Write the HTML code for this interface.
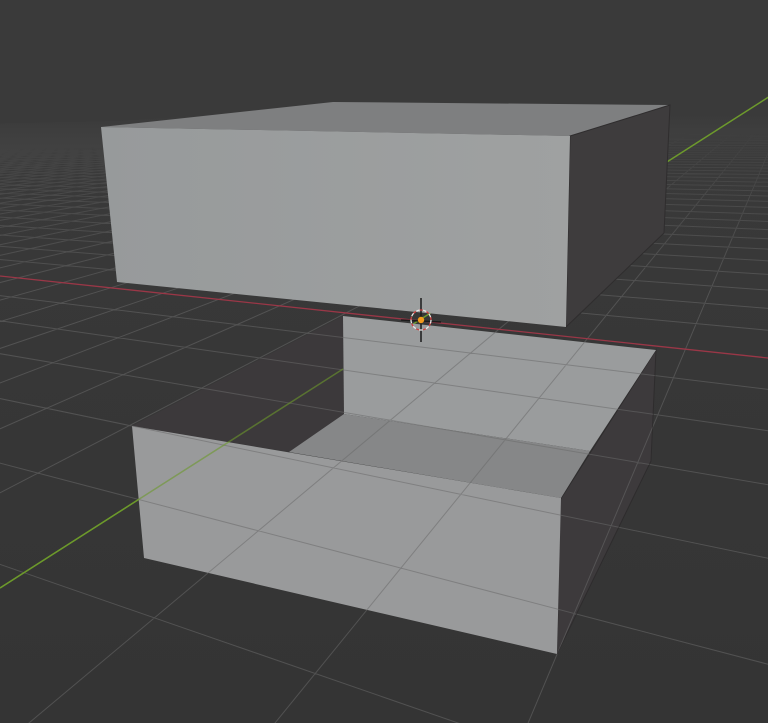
<!DOCTYPE html>
<html><head><meta charset="utf-8"><style>
html,body{margin:0;padding:0;background:#393939;overflow:hidden;width:768px;height:723px;}
svg{display:block}
</style></head><body>
<svg id="s" width="768" height="723" viewBox="0 0 768 723" xmlns="http://www.w3.org/2000/svg">
<defs>
<linearGradient id="bg" x1="0" y1="0" x2="0" y2="1"><stop offset="0" stop-color="#3a3a3a"/><stop offset="1" stop-color="#343434"/></linearGradient>
<linearGradient id="cover" x1="0" y1="0" x2="0" y2="300" gradientUnits="userSpaceOnUse"><stop offset="0" stop-color="#3a3a3a" stop-opacity="1"/><stop offset="0.38" stop-color="#3a3a3a" stop-opacity="1"/><stop offset="0.45" stop-color="#3a3a3a" stop-opacity="0.8"/><stop offset="0.65" stop-color="#3a3a3a" stop-opacity="0.4"/><stop offset="1" stop-color="#3a3a3a" stop-opacity="0"/></linearGradient>
<linearGradient id="front" x1="0" y1="0" x2="1" y2="0"><stop offset="0" stop-color="#979a9b"/><stop offset="1" stop-color="#9fa1a1"/></linearGradient>
</defs>
<rect width="768" height="723" fill="url(#bg)"/>
<g id="grid1" stroke="rgba(106,106,106,0.55)" stroke-width="1" fill="none"></g>
<rect x="0" y="0" width="768" height="300" fill="url(#cover)"/>
<line x1="0" y1="588" x2="850" y2="45" stroke="#6d9a2c" stroke-width="1.5"/>
<line x1="0" y1="276" x2="768" y2="358" stroke="#9a3747" stroke-width="1.3"/>
<polygon points="560,500 656,350 651,461 557,654" fill="#3d3a3c" stroke="#2e2c2d" stroke-width="1"/>
<polygon points="132,426 343,316 344,414 289,452" fill="#3c393b"/>
<polygon points="343,316 656,350 590,451 344,414" fill="#9a9c9d"/>
<polygon points="289,452 344,414 590,451 561,498" fill="#868788"/>
<polygon points="132,426 561,498 557,654 144,558" fill="#999a9b"/>
<g id="grid2" stroke="rgba(106,106,106,0.55)" stroke-width="1" fill="none"></g>
<line x1="0" y1="588" x2="343" y2="369" stroke="#6d9a2c" stroke-opacity="0.6" stroke-width="1.5"/>
<polygon points="101,127 333,102 670,105 570,136" fill="#7e7f80"/>
<polygon points="570,136 670,105 664,233 566,327" fill="#3e3c3d" stroke="#2f2d2e" stroke-width="1"/>
<polygon points="101,127 570,136 566,327 117,282" fill="url(#front)"/>
<g transform="translate(421,320)">
<line x1="0" y1="-22" x2="0" y2="22" stroke="#1a1a1a" stroke-width="1.5"/>
<line x1="-20" y1="0" x2="20" y2="2" stroke="#1a1a1a" stroke-width="1.5"/>
<circle r="10" fill="none" stroke="#e8e8e8" stroke-width="1.3" stroke-dasharray="4 3"/>
<circle r="10" fill="none" stroke="#d04040" stroke-width="1.3" stroke-dasharray="3 4" stroke-dashoffset="3.5"/>
<circle r="3.2" fill="#f39a1c"/>
</g>
</svg>
<script>
(function(){
var O=[420,320],V1=[-1200,149],V2=[800,77],a=-0.047,b=-0.085;
function P(X,Y){var w=a*X+b*Y+1;return [(a*X*V1[0]+b*Y*V2[0]+O[0])/w,(a*X*V1[1]+b*Y*V2[1]+O[1])/w];}
var d="";
for(var X=-80;X<=80;X++){ if(X==0)continue; var c=1+a*X; if(c<=0.02)continue;
 var ymax=(c-0.02)/(-b); var p1=P(X,ymax),p2=P(X,-600); d+="M"+p1[0].toFixed(1)+" "+p1[1].toFixed(1)+"L"+p2[0].toFixed(1)+" "+p2[1].toFixed(1);}
for(var Y=-80;Y<=80;Y++){ if(Y==0)continue; var c=1+b*Y; if(c<=0.02)continue;
 var xmax=(c-0.02)/(-a); var p1=P(xmax,Y),p2=P(-600,Y); d+="M"+p1[0].toFixed(1)+" "+p1[1].toFixed(1)+"L"+p2[0].toFixed(1)+" "+p2[1].toFixed(1);}
var ns="http://www.w3.org/2000/svg";
["grid1","grid2"].forEach(function(id){var p=document.createElementNS(ns,"path");p.setAttribute("d",d);document.getElementById(id).appendChild(p);});
var cp=document.createElementNS(ns,"clipPath");cp.setAttribute("id","cb");
var pg=document.createElementNS(ns,"polygon");pg.setAttribute("points","132,426 343,316 656,350 651,461 557,654 144,558");cp.appendChild(pg);
document.querySelector("defs").appendChild(cp);
document.getElementById("grid2").setAttribute("clip-path","url(#cb)");
})();
</script>
</body></html>
